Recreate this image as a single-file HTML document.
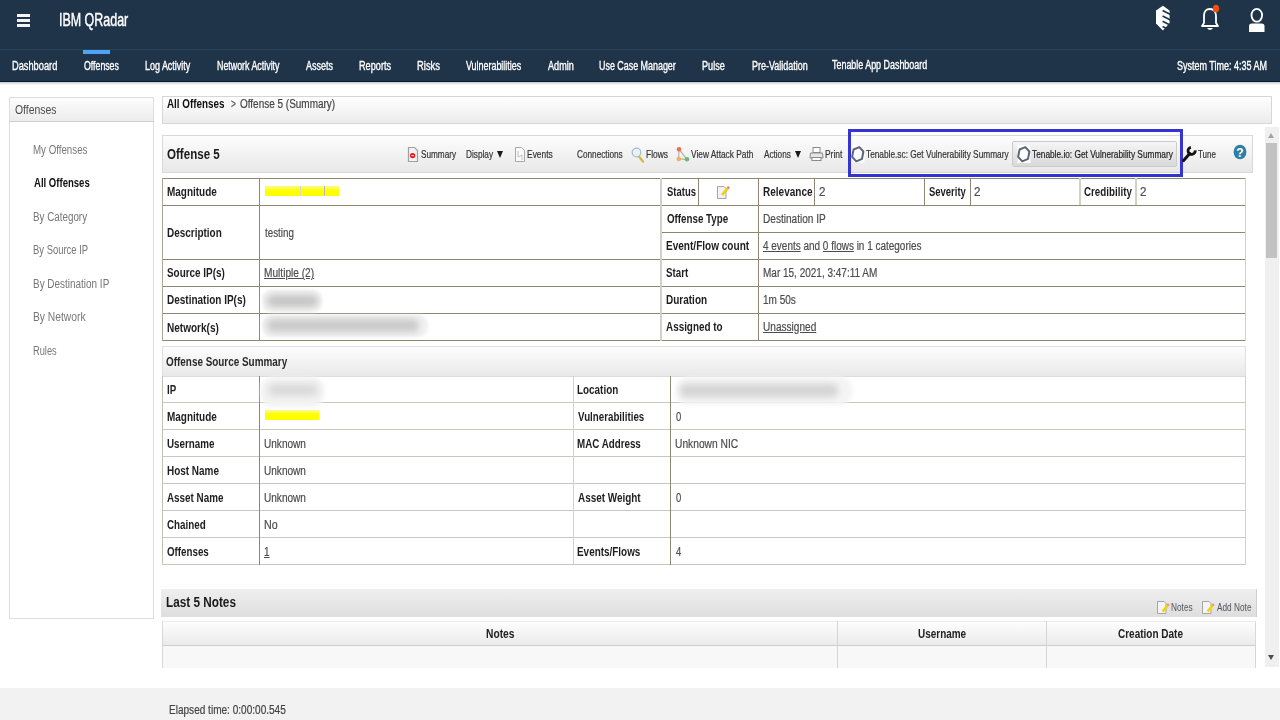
<!DOCTYPE html>
<html><head><meta charset="utf-8"><style>
html,body{margin:0;padding:0;width:1280px;height:720px;overflow:hidden;background:#fff;font-family:"Liberation Sans",sans-serif;}
.a{position:absolute;box-sizing:border-box;}
.t{position:absolute;white-space:pre;transform-origin:0 0;-webkit-text-stroke:0.2px currentColor;}
</style></head><body>
<!-- header -->
<div class=a style="left:0;top:0;width:1280px;height:82px;background:#1f3449"></div>
<div class=a style="left:0;top:49px;width:1280px;height:1px;background:#23445a"></div>
<div class=a style="left:0;top:81px;width:1280px;height:1px;background:#011a33"></div>
<div class=a style="left:0;top:82px;width:1280px;height:3px;background:linear-gradient(rgba(40,50,60,0.28),rgba(40,50,60,0))"></div>
<div class=a style="left:83px;top:50px;width:27px;height:4px;background:#4ea4f4"></div>
<div class=a style="left:17px;top:14px;width:13px;height:3px;background:#f4f4f4"></div>
<div class=a style="left:17px;top:19px;width:13px;height:3px;background:#f4f4f4"></div>
<div class=a style="left:17px;top:24px;width:13px;height:3px;background:#f4f4f4"></div>
<!-- shield -->
<svg class=a style="left:1150px;top:2px" width="26" height="32" viewBox="0 0 26 32">
  <path d="M12.9 3.8 L19.6 8.6 L19.6 21 L12.9 28.6 L6 21.5 L6 8.4 Z" fill="#fff"/>
  <path d="M12.6 8.6 L20.5 12.6 M12.6 13.9 L20.5 17.9 M12.6 19.2 L20.5 23.2 M12.6 24.5 L20.5 28.5" stroke="#1f3449" stroke-width="1.7"/>
</svg>
<!-- bell -->
<svg class=a style="left:1199px;top:4px" width="24" height="29" viewBox="0 0 24 29">
  <path d="M3 22 L5 19 L5 12 Q5 5 11 5 Q17 5 17 12 L17 19 L19 22 Z" fill="none" stroke="#fff" stroke-width="1.8" stroke-linejoin="round"/>
  <path d="M8 24 Q11 28 14 24 Z" fill="#fff"/>
  <ellipse cx="17" cy="4.6" rx="3.2" ry="3.8" fill="#f04e0a"/>
</svg>
<!-- user -->
<svg class=a style="left:1248px;top:6px" width="18" height="27" viewBox="0 0 18 27">
  <ellipse cx="8.8" cy="9.3" rx="5.3" ry="6.4" fill="none" stroke="#fff" stroke-width="1.8"/>
  <path d="M1 26 L1 20 Q1 17.5 4 17.5 L13.5 17.5 Q16.5 17.5 16.5 20 L16.5 26 Z" fill="#fff"/>
</svg>

<!-- sidebar -->
<div class=a style="left:9px;top:97px;width:145px;height:522px;border:1px solid #dedede;background:#fff"></div>
<div class=a style="left:9px;top:97px;width:145px;height:25px;border:1px solid #dedede;border-bottom:1px solid #cfcfcf;background:linear-gradient(#fdfdfd,#ececec)"></div>

<!-- breadcrumb -->
<div class=a style="left:162px;top:96px;width:1110px;height:28px;border:1px solid #d6d6d6;background:linear-gradient(#ffffff,#ebebeb)"></div>

<!-- offense header -->
<div class=a style="left:162px;top:135px;width:1091px;height:38px;border:1px solid #d8d8d8;background:linear-gradient(#fdfdfd,#e8e8e8)"></div>
<!-- blue box -->
<div class=a style="left:848px;top:129px;width:335px;height:48px;border:3px solid #3434d0"></div>
<!-- tenable.io button -->
<div class=a style="left:1012px;top:141px;width:165px;height:26px;border:1px solid #cbcbcb;border-radius:2px;background:linear-gradient(#f5f5f5,#d9d9d9)"></div>

<!-- toolbar icons -->
<svg class=a style="left:407px;top:146px" width="12" height="17" viewBox="0 0 12 17">
  <path d="M1.5 1.5 L7.5 1.5 L10.5 4.5 L10.5 15.5 L1.5 15.5 Z" fill="#f2f2f2" stroke="#a0a0a0" stroke-width="1.2"/>
  <circle cx="5.6" cy="9.6" r="2.7" fill="#e81818"/>
  <rect x="4.3" y="9.2" width="2.6" height="0.9" fill="#fff"/>
</svg>
<div class=a style="left:496.5px;top:151px;width:0;height:0;border-left:3.5px solid transparent;border-right:3.5px solid transparent;border-top:7px solid #1a1a1a"></div>
<svg class=a style="left:514px;top:146px" width="12" height="17" viewBox="0 0 12 17">
  <path d="M1.5 1.5 L7.5 1.5 L10.5 4.5 L10.5 15.5 L1.5 15.5 Z" fill="#fafafa" stroke="#a8a8a8" stroke-width="1"/>
  <path d="M4 5 L4 11 M4 11 L8 9 M8 9 L8 14" stroke="#bbb" stroke-width="0.9" fill="none"/>
</svg>
<svg class=a style="left:631px;top:146px" width="14" height="17" viewBox="0 0 14 17">
  <line x1="7.5" y1="10" x2="12" y2="15.5" stroke="#d9b84a" stroke-width="2.4" stroke-linecap="round"/>
  <circle cx="5.5" cy="6.5" r="4.3" fill="#e8f2fa" stroke="#a9bccb" stroke-width="1.3"/>
</svg>
<svg class=a style="left:676px;top:146px" width="14" height="17" viewBox="0 0 14 17">
  <path d="M3 3 L2.5 13 L11 13.5 Z" fill="none" stroke="#b9b9a9" stroke-width="1.3"/>
  <circle cx="3" cy="3.2" r="2.3" fill="#e8705a"/>
  <circle cx="2.8" cy="13" r="2.3" fill="#f0b060"/>
  <circle cx="11" cy="13.3" r="2.3" fill="#6cb878"/>
</svg>
<div class=a style="left:794.5px;top:151px;width:0;height:0;border-left:3.5px solid transparent;border-right:3.5px solid transparent;border-top:7px solid #1a1a1a"></div>
<svg class=a style="left:809px;top:146px" width="15" height="16" viewBox="0 0 15 16">
  <rect x="4" y="1.5" width="7" height="5" fill="#fff" stroke="#8a8a8a" stroke-width="1"/>
  <path d="M1.5 7 L13.5 7 L14 12 L1 12 Z" fill="#e6e6e6" stroke="#8a8a8a" stroke-width="1"/>
  <rect x="3" y="11.5" width="9" height="3" fill="#fafafa" stroke="#8a8a8a" stroke-width="1"/>
</svg>
<svg class=a style="left:850px;top:144px" width="16" height="21" viewBox="0 0 16 21">
  <rect x="1.5" y="1" width="13" height="18" fill="#fff" opacity="0.7"/>
  <path d="M7.8 2.9 L12.7 6.4 L12.9 13.9 L7.8 17.5 L2.8 14 L2.7 6.5 Z" fill="none" stroke="#5d6677" stroke-width="2" stroke-linejoin="round" transform="rotate(12 7.8 10.2)"/>
</svg>
<svg class=a style="left:1016px;top:144px" width="16" height="21" viewBox="0 0 16 21">
  <rect x="1.5" y="1" width="13" height="18" fill="#fff" opacity="1"/>
  <path d="M7.8 2.9 L12.7 6.4 L12.9 13.9 L7.8 17.5 L2.8 14 L2.7 6.5 Z" fill="none" stroke="#5d6677" stroke-width="2" stroke-linejoin="round" transform="rotate(12 7.8 10.2)"/>
</svg>
<svg class=a style="left:1181px;top:144px" width="17" height="19" viewBox="0 0 17 19">
  <path d="M2.6 16.6 L8.8 9.4" stroke="#111" stroke-width="3" stroke-linecap="round"/>
  <path d="M9.9 3.3 A3.6 3.6 0 1 0 14.2 6.4" stroke="#111" stroke-width="2.8" fill="none"/>
</svg>
<svg class=a style="left:1233px;top:144px" width="14" height="17" viewBox="0 0 14 17">
  <ellipse cx="7" cy="8" rx="6.4" ry="7.3" fill="#2f7ea8"/>
  <text x="7" y="12.6" text-anchor="middle" font-family="Liberation Sans" font-weight="bold" font-size="12" fill="#fff">?</text>
</svg>

<!-- scrollbar -->
<div class=a style="left:1265px;top:127px;width:14px;height:540px;background:#f0f0f0"></div>
<div class=a style="left:1266px;top:143px;width:11px;height:115px;background:#c2c2c2"></div>
<div class=a style="left:1267.5px;top:133px;width:0;height:0;border-left:3.5px solid transparent;border-right:3.5px solid transparent;border-bottom:5px solid #a3a3a3"></div>
<div class=a style="left:1267.5px;top:655px;width:0;height:0;border-left:3.5px solid transparent;border-right:3.5px solid transparent;border-top:5px solid #505050"></div>

<!-- main table -->
<div class=a style="left:162px;top:178px;width:1084px;height:163px;background:#fff"></div>
<div class=a style="left:162px;top:178px;width:1084px;height:1px;background:#8d8670"></div>
<div class=a style="left:162px;top:205px;width:1084px;height:1px;background:#8d8670"></div>
<div class=a style="left:162px;top:259px;width:1084px;height:1px;background:#8d8670"></div>
<div class=a style="left:162px;top:286px;width:1084px;height:1px;background:#8d8670"></div>
<div class=a style="left:162px;top:313px;width:1084px;height:1px;background:#8d8670"></div>
<div class=a style="left:162px;top:340px;width:1084px;height:1px;background:#8d8670"></div>
<div class=a style="left:661px;top:232px;width:585px;height:1px;background:#8d8670"></div>
<div class=a style="left:162px;top:178px;width:1px;height:163px;background:#aca597"></div>
<div class=a style="left:259px;top:178px;width:1px;height:163px;background:#8f8874"></div>
<div class=a style="left:758px;top:178px;width:1px;height:163px;background:#8f8874"></div>
<div class=a style="left:660px;top:178px;width:2px;height:163px;background:#d3d0c6"></div>
<div class=a style="left:1244.5px;top:178px;width:1.5px;height:163px;background:#d3d0c6"></div>
<div class=a style="left:698px;top:178px;width:1px;height:27px;background:#8f8874"></div>
<div class=a style="left:814px;top:178px;width:1px;height:27px;background:#8f8874"></div>
<div class=a style="left:924px;top:178px;width:1px;height:27px;background:#8f8874"></div>
<div class=a style="left:970px;top:178px;width:1px;height:27px;background:#8f8874"></div>
<div class=a style="left:1078.5px;top:178px;width:2px;height:27px;background:#d3d0c6"></div>
<div class=a style="left:1134.5px;top:178px;width:2px;height:27px;background:#d3d0c6"></div>
<!-- magnitude bar -->
<div class=a style="left:265px;top:186px;width:74px;height:10px;background:linear-gradient(#fbfb90,#ffff00 45%,#ffff00)"></div>
<div class=a style="left:300px;top:186px;width:1px;height:10px;background:#d8d8c0"></div>
<div class=a style="left:324px;top:186px;width:1px;height:10px;background:#b8b8a8"></div>
<!-- status icon -->
<svg class=a style="left:716px;top:185px" width="15" height="15" viewBox="0 0 15 15">
  <path d="M1.5 1.5 L8 1.5 L10 3.5 L10 13.5 L1.5 13.5 Z" fill="#f2f2f2" stroke="#a5a5a5" stroke-width="1"/>
  <path d="M6 10 L12.5 2.5" stroke="#f0d000" stroke-width="2.6"/>
  <path d="M11.5 3.5 L13 1.8" stroke="#f08080" stroke-width="2.4"/>
</svg>
<!-- blurred -->

<!-- source summary header -->
<div class=a style="left:162px;top:346px;width:1084px;height:31px;border:1px solid #e0e0e0;border-bottom:0;background:linear-gradient(#fdfdfd,#e8e8e8)"></div>
<div class=a style="left:162px;top:376px;width:1084px;height:189px;background:#fff"></div>
<div class=a style="left:162px;top:376px;width:1084px;height:1px;background:#dcdcdc"></div>
<div class=a style="left:162px;top:402px;width:1084px;height:1px;background:#c9c6bb"></div>
<div class=a style="left:162px;top:429px;width:1084px;height:1px;background:#c9c6bb"></div>
<div class=a style="left:162px;top:456px;width:1084px;height:1px;background:#c9c6bb"></div>
<div class=a style="left:162px;top:483px;width:1084px;height:1px;background:#c9c6bb"></div>
<div class=a style="left:162px;top:510px;width:1084px;height:1px;background:#c9c6bb"></div>
<div class=a style="left:162px;top:537px;width:1084px;height:1px;background:#c9c6bb"></div>
<div class=a style="left:162px;top:564px;width:1084px;height:1px;background:#c9c6bb"></div>
<div class=a style="left:162px;top:376px;width:1px;height:189px;background:#c4c0b4"></div>
<div class=a style="left:259px;top:376px;width:1px;height:189px;background:#8f8874"></div>
<div class=a style="left:670px;top:376px;width:1px;height:189px;background:#8f8874"></div>
<div class=a style="left:572.5px;top:376px;width:1.5px;height:189px;background:#d3d0c6"></div>
<div class=a style="left:1244.5px;top:376px;width:1.5px;height:189px;background:#d3d0c6"></div>
<div class=a style="left:265px;top:410px;width:54px;height:10px;background:linear-gradient(#fbfb90,#ffff00 45%,#ffff00)"></div>

<!-- blobs -->
<div class=a style="left:262px;top:290px;width:60px;height:22px;border-radius:9px;background:#f0f0f0;filter:blur(1.5px)"></div>
<div class=a style="left:267px;top:295px;width:51px;height:12px;border-radius:6px;background:#c6c6c6;filter:blur(3px)"></div>
<div class=a style="left:262px;top:315px;width:166px;height:22px;border-radius:9px;background:#f0f0f0;filter:blur(1.5px)"></div>
<div class=a style="left:267px;top:319px;width:152px;height:13px;border-radius:6px;background:#cbcbcb;filter:blur(3px)"></div>
<div class=a style="left:261px;top:377px;width:63px;height:30px;border-radius:12px;background:#f3f3f3;filter:blur(2px)"></div>
<div class=a style="left:268px;top:384px;width:50px;height:12px;border-radius:6px;background:#d9d9d9;filter:blur(3.5px)"></div>
<div class=a style="left:676px;top:377px;width:176px;height:28px;border-radius:12px;background:#f4f4f4;filter:blur(2px)"></div>
<div class=a style="left:680px;top:384px;width:158px;height:13px;border-radius:6px;background:#d4d4d4;filter:blur(3px)"></div>

<!-- last 5 notes -->
<div class=a style="left:161px;top:589px;width:96px;height:28px;background:linear-gradient(#f0f0f0,#dcdcdc)"></div>
<div class=a style="left:161px;top:589px;width:1096px;height:28px;border-right:1px solid #d0d0d0;background:linear-gradient(#efefef,#dedede)"></div>
<svg class=a style="left:1157px;top:601px" width="14" height="14" viewBox="0 0 14 14">
  <path d="M0.5 0.5 L7 0.5 L9 2.5 L9 12.5 L0.5 12.5 Z" fill="#f4f4f4" stroke="#a5a5a5" stroke-width="1"/>
  <path d="M5.6 10.6 L11 4" stroke="#f2d400" stroke-width="2.5"/>
  <path d="M10.4 4.6 L11.8 2.9" stroke="#f09090" stroke-width="2.3"/>
</svg>
<svg class=a style="left:1202px;top:601px" width="14" height="14" viewBox="0 0 14 14">
  <path d="M0.5 0.5 L7 0.5 L9 2.5 L9 12.5 L0.5 12.5 Z" fill="#f4f4f4" stroke="#a5a5a5" stroke-width="1"/>
  <path d="M5.6 10.6 L11 4" stroke="#f2d400" stroke-width="2.5"/>
  <path d="M10.4 4.6 L11.8 2.9" stroke="#f09090" stroke-width="2.3"/>
</svg>
<!-- notes table -->
<div class=a style="left:162px;top:621px;width:1094px;height:47px;border-left:1px solid #d6d6d6;border-right:1px solid #d6d6d6;background:#f8f8f8"></div>
<div class=a style="left:162px;top:621px;width:1094px;height:25px;border:1px solid #d8d8d8;border-top:1px solid #ececec;border-bottom:1px solid #cdcdcd;background:linear-gradient(#fdfdfd,#ebebeb)"></div>
<div class=a style="left:837px;top:621px;width:1px;height:47px;background:#d4d4d4"></div>
<div class=a style="left:1046px;top:621px;width:1px;height:47px;background:#d4d4d4"></div>

<!-- footer -->
<div class=a style="left:0;top:688px;width:1280px;height:32px;background:#f2f2f2"></div>

<div class=t style="left:59.31px;top:10.6px;font-weight:normal;font-size:18px;line-height:18px;color:#fff;transform:scaleX(0.6919);-webkit-text-stroke:0.45px #fff;">IBM QRadar</div>
<div class=t style="left:12.23px;top:60.0px;font-weight:normal;font-size:12px;line-height:12px;color:#fff;transform:scaleX(0.7719);-webkit-text-stroke:0.35px #fff;">Dashboard</div>
<div class=t style="left:83.80px;top:60.0px;font-weight:normal;font-size:12px;line-height:12px;color:#fff;transform:scaleX(0.7292);-webkit-text-stroke:0.35px #fff;">Offenses</div>
<div class=t style="left:145.06px;top:60.0px;font-weight:normal;font-size:12px;line-height:12px;color:#fff;transform:scaleX(0.7450);-webkit-text-stroke:0.35px #fff;">Log Activity</div>
<div class=t style="left:216.76px;top:60.0px;font-weight:normal;font-size:12px;line-height:12px;color:#fff;transform:scaleX(0.7381);-webkit-text-stroke:0.35px #fff;">Network Activity</div>
<div class=t style="left:306.30px;top:60.0px;font-weight:normal;font-size:12px;line-height:12px;color:#fff;transform:scaleX(0.7500);-webkit-text-stroke:0.35px #fff;">Assets</div>
<div class=t style="left:359.24px;top:60.0px;font-weight:normal;font-size:12px;line-height:12px;color:#fff;transform:scaleX(0.7634);-webkit-text-stroke:0.35px #fff;">Reports</div>
<div class=t style="left:416.71px;top:60.0px;font-weight:normal;font-size:12px;line-height:12px;color:#fff;transform:scaleX(0.7857);-webkit-text-stroke:0.35px #fff;">Risks</div>
<div class=t style="left:466.30px;top:60.0px;font-weight:normal;font-size:12px;line-height:12px;color:#fff;transform:scaleX(0.7432);-webkit-text-stroke:0.35px #fff;">Vulnerabilities</div>
<div class=t style="left:547.50px;top:60.0px;font-weight:normal;font-size:12px;line-height:12px;color:#fff;transform:scaleX(0.7588);-webkit-text-stroke:0.35px #fff;">Admin</div>
<div class=t style="left:599.06px;top:60.0px;font-weight:normal;font-size:12px;line-height:12px;color:#fff;transform:scaleX(0.7427);-webkit-text-stroke:0.35px #fff;">Use Case Manager</div>
<div class=t style="left:702.24px;top:60.0px;font-weight:normal;font-size:12px;line-height:12px;color:#fff;transform:scaleX(0.7586);-webkit-text-stroke:0.35px #fff;">Pulse</div>
<div class=t style="left:751.75px;top:60.0px;font-weight:normal;font-size:12px;line-height:12px;color:#fff;transform:scaleX(0.7479);-webkit-text-stroke:0.35px #fff;">Pre-Validation</div>
<div class=t style="left:832.40px;top:58.5px;font-weight:normal;font-size:12px;line-height:12px;color:#fff;transform:scaleX(0.7430);-webkit-text-stroke:0.35px #fff;">Tenable App Dashboard</div>
<div class=t style="left:1176.95px;top:59.6px;font-weight:normal;font-size:12px;line-height:12px;color:#fff;transform:scaleX(0.7500);-webkit-text-stroke:0.35px #fff;">System Time: 4:35 AM</div>
<div class=t style="left:15.00px;top:104.2px;font-weight:normal;font-size:12px;line-height:12px;color:#4a4a4a;transform:scaleX(0.8688);-webkit-text-stroke:0;">Offenses</div>
<div class=t style="left:32.69px;top:144.0px;font-weight:normal;font-size:12px;line-height:12px;color:#777;transform:scaleX(0.8106);-webkit-text-stroke:0;">My Offenses</div>
<div class=t style="left:33.50px;top:177.4px;font-weight:bold;font-size:12px;line-height:12px;color:#111;transform:scaleX(0.7957);-webkit-text-stroke:0;-webkit-text-stroke:0;">All Offenses</div>
<div class=t style="left:32.68px;top:210.9px;font-weight:normal;font-size:12px;line-height:12px;color:#777;transform:scaleX(0.8185);-webkit-text-stroke:0;">By Category</div>
<div class=t style="left:32.71px;top:244.4px;font-weight:normal;font-size:12px;line-height:12px;color:#777;transform:scaleX(0.7870);-webkit-text-stroke:0;">By Source IP</div>
<div class=t style="left:32.67px;top:277.8px;font-weight:normal;font-size:12px;line-height:12px;color:#777;transform:scaleX(0.8286);-webkit-text-stroke:0;">By Destination IP</div>
<div class=t style="left:32.64px;top:311.2px;font-weight:normal;font-size:12px;line-height:12px;color:#777;transform:scaleX(0.8567);-webkit-text-stroke:0;">By Network</div>
<div class=t style="left:32.73px;top:344.7px;font-weight:normal;font-size:12px;line-height:12px;color:#777;transform:scaleX(0.7733);-webkit-text-stroke:0;">Rules</div>
<div class=t style="left:166.60px;top:98.4px;font-weight:bold;font-size:12px;line-height:12px;color:#111;transform:scaleX(0.8200);-webkit-text-stroke:0;">All Offenses</div>
<div class=t style="left:231.00px;top:97.5px;font-weight:normal;font-size:12px;line-height:12px;color:#555;transform:scaleX(0.6857);">&gt;</div>
<div class=t style="left:240.00px;top:98.4px;font-weight:normal;font-size:12px;line-height:12px;color:#444;transform:scaleX(0.8307);">Offense 5 (Summary)</div>
<div class=t style="left:167.40px;top:147.0px;font-weight:bold;font-size:14px;line-height:14px;color:#1a1a1a;transform:scaleX(0.8266);-webkit-text-stroke:0;">Offense 5</div>
<div class=t style="left:420.60px;top:149.0px;font-weight:normal;font-size:11px;line-height:11px;color:#333;transform:scaleX(0.7447);">Summary</div>
<div class=t style="left:466.15px;top:149.0px;font-weight:normal;font-size:11px;line-height:11px;color:#333;transform:scaleX(0.7486);">Display</div>
<div class=t style="left:527.03px;top:149.0px;font-weight:normal;font-size:11px;line-height:11px;color:#333;transform:scaleX(0.7667);">Events</div>
<div class=t style="left:576.90px;top:149.0px;font-weight:normal;font-size:11px;line-height:11px;color:#333;transform:scaleX(0.7475);">Connections</div>
<div class=t style="left:645.53px;top:149.0px;font-weight:normal;font-size:11px;line-height:11px;color:#333;transform:scaleX(0.7679);">Flows</div>
<div class=t style="left:691.30px;top:149.0px;font-weight:normal;font-size:11px;line-height:11px;color:#333;transform:scaleX(0.7573);">View Attack Path</div>
<div class=t style="left:763.70px;top:149.0px;font-weight:normal;font-size:11px;line-height:11px;color:#333;transform:scaleX(0.7417);">Actions</div>
<div class=t style="left:824.84px;top:149.0px;font-weight:normal;font-size:11px;line-height:11px;color:#333;transform:scaleX(0.7636);">Print</div>
<div class=t style="left:866.00px;top:148.8px;font-weight:normal;font-size:11px;line-height:11px;color:#333;transform:scaleX(0.7540);">Tenable.sc: Get Vulnerability Summary</div>
<div class=t style="left:1032.40px;top:148.6px;font-weight:normal;font-size:11px;line-height:11px;color:#222;transform:scaleX(0.7545);">Tenable.io: Get Vulnerability Summary</div>
<div class=t style="left:1197.60px;top:149.0px;font-weight:normal;font-size:11px;line-height:11px;color:#333;transform:scaleX(0.7250);">Tune</div>
<div class=t style="left:166.57px;top:185.8px;font-weight:bold;font-size:12px;line-height:12px;color:#1e1e1e;transform:scaleX(0.8305);-webkit-text-stroke:0;">Magnitude</div>
<div class=t style="left:166.57px;top:226.5px;font-weight:bold;font-size:12px;line-height:12px;color:#1e1e1e;transform:scaleX(0.8292);-webkit-text-stroke:0;">Description</div>
<div class=t style="left:264.70px;top:226.5px;font-weight:normal;font-size:12px;line-height:12px;color:#4c4c4c;transform:scaleX(0.8171);">testing</div>
<div class=t style="left:167.40px;top:267.0px;font-weight:bold;font-size:12px;line-height:12px;color:#1e1e1e;transform:scaleX(0.8257);-webkit-text-stroke:0;">Source IP(s)</div>
<div class=t style="left:263.86px;top:267.0px;font-weight:normal;font-size:12px;line-height:12px;color:#4c4c4c;transform:scaleX(0.8448);text-decoration:underline;">Multiple (2)</div>
<div class=t style="left:166.57px;top:294.2px;font-weight:bold;font-size:12px;line-height:12px;color:#1e1e1e;transform:scaleX(0.8319);-webkit-text-stroke:0;">Destination IP(s)</div>
<div class=t style="left:166.56px;top:321.5px;font-weight:bold;font-size:12px;line-height:12px;color:#1e1e1e;transform:scaleX(0.8361);-webkit-text-stroke:0;">Network(s)</div>
<div class=t style="left:666.60px;top:185.8px;font-weight:bold;font-size:12px;line-height:12px;color:#1e1e1e;transform:scaleX(0.7892);-webkit-text-stroke:0;">Status</div>
<div class=t style="left:762.57px;top:185.8px;font-weight:bold;font-size:12px;line-height:12px;color:#1e1e1e;transform:scaleX(0.8345);-webkit-text-stroke:0;">Relevance</div>
<div class=t style="left:818.70px;top:185.8px;font-weight:normal;font-size:12px;line-height:12px;color:#4c4c4c;transform:scaleX(0.9667);">2</div>
<div class=t style="left:929.30px;top:185.8px;font-weight:bold;font-size:12px;line-height:12px;color:#1e1e1e;transform:scaleX(0.7894);-webkit-text-stroke:0;">Severity</div>
<div class=t style="left:974.40px;top:185.8px;font-weight:normal;font-size:12px;line-height:12px;color:#4c4c4c;transform:scaleX(0.9667);">2</div>
<div class=t style="left:1083.80px;top:185.8px;font-weight:bold;font-size:12px;line-height:12px;color:#1e1e1e;transform:scaleX(0.8153);-webkit-text-stroke:0;">Credibility</div>
<div class=t style="left:1139.80px;top:185.8px;font-weight:normal;font-size:12px;line-height:12px;color:#4c4c4c;transform:scaleX(0.9667);">2</div>
<div class=t style="left:666.60px;top:213.2px;font-weight:bold;font-size:12px;line-height:12px;color:#1e1e1e;transform:scaleX(0.8133);-webkit-text-stroke:0;">Offense Type</div>
<div class=t style="left:762.56px;top:213.2px;font-weight:normal;font-size:12px;line-height:12px;color:#4c4c4c;transform:scaleX(0.8397);">Destination IP</div>
<div class=t style="left:665.76px;top:240.2px;font-weight:bold;font-size:12px;line-height:12px;color:#1e1e1e;transform:scaleX(0.8367);-webkit-text-stroke:0;">Event/Flow count</div>
<div class=t style="left:762.90px;top:240.2px;font-weight:normal;font-size:12px;line-height:12px;color:#4c4c4c;transform:scaleX(0.8304);"><u>4 events</u> and <u>0 flows</u> in 1 categories</div>
<div class=t style="left:666.40px;top:266.9px;font-weight:bold;font-size:12px;line-height:12px;color:#1e1e1e;transform:scaleX(0.8111);-webkit-text-stroke:0;">Start</div>
<div class=t style="left:762.87px;top:266.9px;font-weight:normal;font-size:12px;line-height:12px;color:#4c4c4c;transform:scaleX(0.8331);">Mar 15, 2021, 3:47:11 AM</div>
<div class=t style="left:665.57px;top:293.6px;font-weight:bold;font-size:12px;line-height:12px;color:#1e1e1e;transform:scaleX(0.8333);-webkit-text-stroke:0;">Duration</div>
<div class=t style="left:762.87px;top:293.6px;font-weight:normal;font-size:12px;line-height:12px;color:#4c4c4c;transform:scaleX(0.8342);">1m 50s</div>
<div class=t style="left:666.40px;top:320.5px;font-weight:bold;font-size:12px;line-height:12px;color:#1e1e1e;transform:scaleX(0.8235);-webkit-text-stroke:0;">Assigned to</div>
<div class=t style="left:762.86px;top:320.5px;font-weight:normal;font-size:12px;line-height:12px;color:#4c4c4c;transform:scaleX(0.8403);text-decoration:underline;">Unassigned</div>
<div class=t style="left:165.60px;top:356.0px;font-weight:bold;font-size:12px;line-height:12px;color:#2a2a2a;transform:scaleX(0.8259);-webkit-text-stroke:0;">Offense Source Summary</div>
<div class=t style="left:166.59px;top:383.8px;font-weight:bold;font-size:12px;line-height:12px;color:#1e1e1e;transform:scaleX(0.8100);-webkit-text-stroke:0;">IP</div>
<div class=t style="left:166.57px;top:410.8px;font-weight:bold;font-size:12px;line-height:12px;color:#1e1e1e;transform:scaleX(0.8305);-webkit-text-stroke:0;">Magnitude</div>
<div class=t style="left:167.40px;top:437.8px;font-weight:bold;font-size:12px;line-height:12px;color:#1e1e1e;transform:scaleX(0.8172);-webkit-text-stroke:0;">Username</div>
<div class=t style="left:166.57px;top:464.8px;font-weight:bold;font-size:12px;line-height:12px;color:#1e1e1e;transform:scaleX(0.8290);-webkit-text-stroke:0;">Host Name</div>
<div class=t style="left:167.40px;top:491.8px;font-weight:bold;font-size:12px;line-height:12px;color:#1e1e1e;transform:scaleX(0.8203);-webkit-text-stroke:0;">Asset Name</div>
<div class=t style="left:167.40px;top:518.8px;font-weight:bold;font-size:12px;line-height:12px;color:#1e1e1e;transform:scaleX(0.8191);-webkit-text-stroke:0;">Chained</div>
<div class=t style="left:167.40px;top:545.8px;font-weight:bold;font-size:12px;line-height:12px;color:#1e1e1e;transform:scaleX(0.8137);-webkit-text-stroke:0;">Offenses</div>
<div class=t style="left:264.36px;top:437.8px;font-weight:normal;font-size:12px;line-height:12px;color:#4c4c4c;transform:scaleX(0.8388);">Unknown</div>
<div class=t style="left:264.36px;top:464.8px;font-weight:normal;font-size:12px;line-height:12px;color:#4c4c4c;transform:scaleX(0.8388);">Unknown</div>
<div class=t style="left:264.36px;top:491.8px;font-weight:normal;font-size:12px;line-height:12px;color:#4c4c4c;transform:scaleX(0.8388);">Unknown</div>
<div class=t style="left:264.31px;top:518.8px;font-weight:normal;font-size:12px;line-height:12px;color:#4c4c4c;transform:scaleX(0.8929);">No</div>
<div class=t style="left:263.87px;top:545.8px;font-weight:normal;font-size:12px;line-height:12px;color:#4c4c4c;transform:scaleX(0.8333);text-decoration:underline;">1</div>
<div class=t style="left:577.38px;top:383.8px;font-weight:bold;font-size:12px;line-height:12px;color:#1e1e1e;transform:scaleX(0.8245);-webkit-text-stroke:0;">Location</div>
<div class=t style="left:578.20px;top:410.8px;font-weight:bold;font-size:12px;line-height:12px;color:#1e1e1e;transform:scaleX(0.8122);-webkit-text-stroke:0;">Vulnerabilities</div>
<div class=t style="left:577.38px;top:437.8px;font-weight:bold;font-size:12px;line-height:12px;color:#1e1e1e;transform:scaleX(0.8156);-webkit-text-stroke:0;">MAC Address</div>
<div class=t style="left:578.20px;top:491.8px;font-weight:bold;font-size:12px;line-height:12px;color:#1e1e1e;transform:scaleX(0.8263);-webkit-text-stroke:0;">Asset Weight</div>
<div class=t style="left:577.37px;top:545.8px;font-weight:bold;font-size:12px;line-height:12px;color:#1e1e1e;transform:scaleX(0.8263);-webkit-text-stroke:0;">Events/Flows</div>
<div class=t style="left:675.60px;top:410.8px;font-weight:normal;font-size:12px;line-height:12px;color:#4c4c4c;transform:scaleX(0.7857);">0</div>
<div class=t style="left:674.75px;top:437.8px;font-weight:normal;font-size:12px;line-height:12px;color:#4c4c4c;transform:scaleX(0.8528);">Unknown NIC</div>
<div class=t style="left:675.60px;top:491.8px;font-weight:normal;font-size:12px;line-height:12px;color:#4c4c4c;transform:scaleX(0.7857);">0</div>
<div class=t style="left:675.60px;top:545.8px;font-weight:normal;font-size:12px;line-height:12px;color:#4c4c4c;transform:scaleX(0.7857);">4</div>
<div class=t style="left:165.86px;top:595.0px;font-weight:bold;font-size:14px;line-height:14px;color:#1a1a1a;transform:scaleX(0.8402);-webkit-text-stroke:0;">Last 5 Notes</div>
<div class=t style="left:1171.15px;top:602.2px;font-weight:normal;font-size:11px;line-height:11px;color:#505560;transform:scaleX(0.7536);-webkit-text-stroke:0;">Notes</div>
<div class=t style="left:1216.90px;top:602.2px;font-weight:normal;font-size:11px;line-height:11px;color:#505560;transform:scaleX(0.7522);-webkit-text-stroke:0;">Add Note</div>
<div class=t style="left:485.85px;top:627.5px;font-weight:bold;font-size:12px;line-height:12px;color:#222;transform:scaleX(0.8531);-webkit-text-stroke:0;">Notes</div>
<div class=t style="left:918.00px;top:627.5px;font-weight:bold;font-size:12px;line-height:12px;color:#222;transform:scaleX(0.8293);-webkit-text-stroke:0;">Username</div>
<div class=t style="left:1118.40px;top:627.5px;font-weight:bold;font-size:12px;line-height:12px;color:#222;transform:scaleX(0.8333);-webkit-text-stroke:0;">Creation Date</div>
<div class=t style="left:169.16px;top:704.4px;font-weight:normal;font-size:12px;line-height:12px;color:#444;transform:scaleX(0.8377);">Elapsed time: 0:00:00.545</div>
</body></html>
